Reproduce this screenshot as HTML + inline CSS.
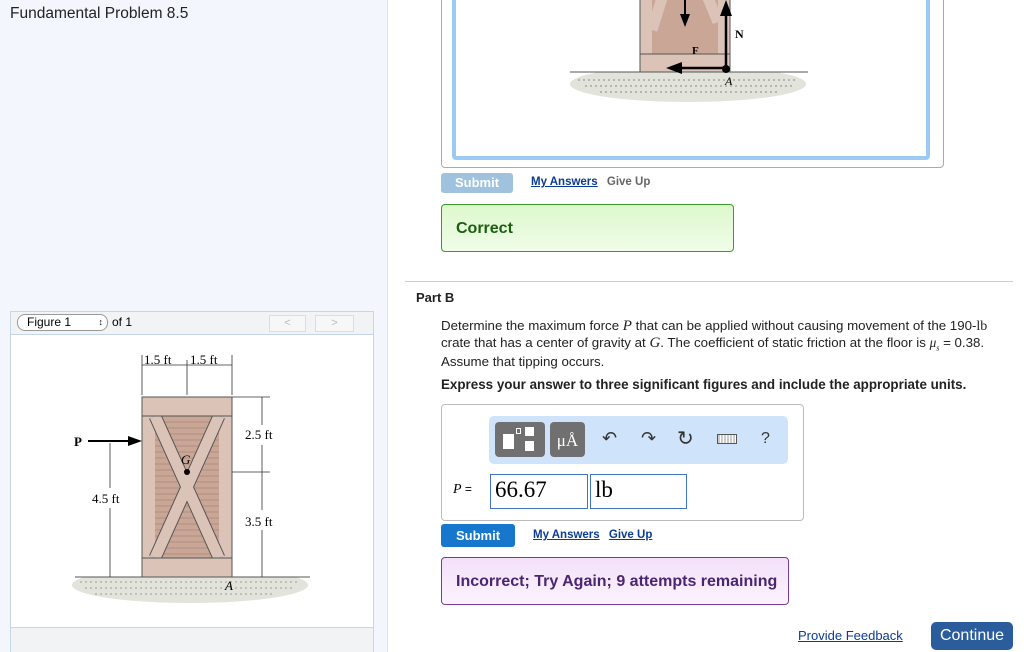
<!DOCTYPE html>
<html><head><meta charset="utf-8"><style>
*{box-sizing:border-box;margin:0;padding:0}
body{width:1024px;height:652px;overflow:hidden;background:#fff;font-family:"Liberation Sans",Arial,sans-serif;position:relative}
.abs{position:absolute}
a{color:#0b3c93}
.m{font-family:'Liberation Serif',serif;line-height:1}
</style></head><body>
<div class="abs" style="left:0;top:0;width:388px;height:652px;background:#f3f7fd;border-right:1px solid #dbe4ee"></div>
<div class="abs" style="left:10px;top:5px;font-size:15.5px;color:#222">Fundamental Problem 8.5</div>

<div class="abs" style="left:10px;top:311px;width:364px;height:341px;border:1px solid #c7d6e6;background:#fff"></div>
<div class="abs" style="left:11px;top:312px;width:362px;height:23px;background:#f1f3f5;border-bottom:1px solid #c7d6e6"></div>
<div class="abs" style="left:17px;top:314px;width:91px;height:17px;border:1px solid #999;border-radius:8px;background:#fff;font-size:12px;padding-left:9px;line-height:15px">Figure 1<span style="position:absolute;right:4px;top:0;font-size:9px">&#8597;</span></div>
<div class="abs" style="left:112px;top:315px;font-size:12px">of 1</div>
<div class="abs" style="left:269px;top:315px;width:37px;height:17px;border:1px solid #ddd;background:#f7f7f7;color:#bbb;font-size:11px;text-align:center;line-height:15px">&lt;</div>
<div class="abs" style="left:315px;top:315px;width:39px;height:17px;border:1px solid #ddd;background:#f7f7f7;color:#bbb;font-size:11px;text-align:center;line-height:15px">&gt;</div>
<div class="abs" style="left:11px;top:627px;width:362px;height:25px;background:#f1f3f5;border-top:1px solid #c7d6e6"></div>

<svg class="abs" style="left:0;top:0" width="1024" height="652" font-family="Liberation Serif,serif">
<ellipse cx="190" cy="585" rx="118" ry="18" fill="#e2e3da"/>
<rect x="70" y="565" width="240" height="12" fill="#fff"/>
<g fill="none" stroke="#888" stroke-width="0.8">
<path d="M80 582h220M85 588h210M95 594h180" stroke-dasharray="2 3"/></g>
<line x1="75" y1="577" x2="310" y2="577" stroke="#555"/>
<rect x="142" y="397" width="90" height="180" fill="#dcc3b8" stroke="#555"/>
<rect x="155" y="416" width="64" height="142" fill="#c9a696"/>
<g stroke="#a5877b" stroke-width="0.7"><path d="M155 422h64M155 428h64M155 434h64M155 440h64M155 446h64M155 452h64M155 458h64M155 464h64M155 470h64M155 476h64M155 482h64M155 488h64M155 494h64M155 500h64M155 506h64M155 512h64M155 518h64M155 524h64M155 530h64M155 536h64M155 542h64M155 548h64M155 554h64"/></g>
<path d="M155 416L219 558M219 416L155 558" stroke="#555" stroke-width="13"/>
<path d="M155 416L219 558M219 416L155 558" stroke="#dcc3b8" stroke-width="11"/>
<rect x="142" y="397" width="90" height="19" fill="#dcc3b8" stroke="#555"/>
<rect x="142" y="558" width="90" height="19" fill="#dcc3b8" stroke="#555"/>
<circle cx="187" cy="472" r="3" fill="#000"/>
<text x="181" y="464" font-size="13" font-style="italic">G</text>
<text x="225" y="590" font-size="13" font-style="italic">A</text>
<g stroke="#333" stroke-width="0.8" fill="none">
<path d="M142 395V355M187 395V360M232 395V355M142 365H232"/>
<path d="M232 397H270M232 472H270M262 397V425M262 445V472M262 472V510M262 530V577"/>
<path d="M110 443V488M110 508V577"/>
</g>
<path d="M88 441H130" stroke="#000" stroke-width="2"/><path d="M128 436L142 441L128 446Z"/>
<text x="74" y="446" font-size="13" font-weight="bold">P</text>
<text x="144" y="364" font-size="13">1.5 ft</text><text x="190" y="364" font-size="13">1.5 ft</text>
<text x="245" y="439" font-size="13">2.5 ft</text>
<text x="245" y="526" font-size="13">3.5 ft</text>
<text x="92" y="503" font-size="13">4.5 ft</text>
</svg>

<div class="abs" style="left:441px;top:-10px;width:503px;height:178px;border:1px solid #aaa;border-radius:4px"></div>
<div class="abs" style="left:452px;top:-10px;width:478px;height:170px;border:4px solid #9dcaf5;border-radius:4px;background:#fff"></div>
<svg class="abs" style="left:0;top:0" width="1024" height="170" font-family="Liberation Serif,serif">
<ellipse cx="688" cy="84" rx="118" ry="18" fill="#e2e3da"/>
<rect x="565" y="58" width="250" height="14" fill="#fff"/>
<path d="M578 80h220M585 86h210M600 92h180" stroke="#888" stroke-dasharray="2 3" fill="none"/>
<line x1="570" y1="72" x2="808" y2="72" stroke="#555"/>
<rect x="640" y="-2" width="90" height="74" fill="#dcc3b8" stroke="#555"/>
<rect x="652" y="-2" width="66" height="56" fill="#c9a696"/>
<path d="M662 -2L652 30M708 -2L718 22" stroke="#dcc3b8" stroke-width="11"/>
<rect x="640" y="54" width="90" height="18" fill="#dcc3b8" stroke="#555"/>
<path d="M685 0V18" stroke="#000" stroke-width="2"/><path d="M680 14L685 27L690 14Z"/>
<path d="M726 70V14" stroke="#000" stroke-width="2.5"/><path d="M720 16L726 0L732 16Z"/>
<path d="M726 68H680" stroke="#000" stroke-width="2.5"/><path d="M682 62L666 68L682 74Z"/>
<circle cx="726" cy="69" r="4"/>
<text x="735" y="38" font-size="12" font-weight="bold">N</text>
<text x="692" y="54" font-size="11" font-weight="bold">F</text>
<text x="725" y="85" font-size="12" font-style="italic">A</text>
</svg>

<div class="abs" style="left:441px;top:173px;width:72px;height:20px;background:#9fc2de;border-radius:3px;color:#fff;font-weight:bold;font-size:13px;text-align:center;line-height:20px">Submit</div>
<div class="abs" style="left:531px;top:176px;font-size:11.5px;font-weight:bold"><a style="text-decoration:underline">My Answers</a> <span style="color:#666;margin-left:6px">Give Up</span></div>
<div class="abs" style="left:441px;top:204px;width:293px;height:48px;border:1px solid #3d9a2d;border-radius:4px;background:linear-gradient(#ddf8cc,#f0fde8);color:#1b5e10;font-weight:bold;font-size:16px;padding:15px 0 0 14px">Correct</div>

<div class="abs" style="left:405px;top:281px;width:608px;height:1px;background:#ccc"></div>
<div class="abs" style="left:416px;top:290px;font-size:13px;font-weight:bold;color:#222">Part B</div>
<div class="abs" style="left:441px;top:317px;font-size:13.3px;line-height:17px;color:#222;white-space:nowrap">Determine the maximum force <i class="m" style="font-size:15px">P</i> that can be applied without causing movement of the 190-<span class="m" style="font-size:14px">lb</span><br>crate that has a center of gravity at <i class="m" style="font-size:15px">G</i>. The coefficient of static friction at the floor is <i class="m">μ<sub style="font-size:8px">s</sub></i> = 0.38.<br>Assume that tipping occurs.</div>
<div class="abs" style="left:441px;top:377px;font-size:13.4px;font-weight:bold;color:#222">Express your answer to three significant figures and include the appropriate units.</div>

<div class="abs" style="left:441px;top:404px;width:363px;height:117px;border:1px solid #bbb;border-radius:4px"></div>
<div class="abs" style="left:489px;top:416px;width:299px;height:48px;background:#cfe4fb;border-radius:5px"></div>
<div class="abs" style="left:495px;top:422px;width:50px;height:35px;background:#707070;border-radius:4px"></div>
<div class="abs" style="left:503px;top:434px;width:11px;height:15px;background:#fff"></div>
<div class="abs" style="left:516px;top:428px;width:5px;height:6px;border:1px solid #fff"></div>
<div class="abs" style="left:525px;top:427px;width:9px;height:9px;background:#fff"></div>
<div class="abs" style="left:525px;top:441px;width:9px;height:10px;background:#fff"></div>
<div class="abs" style="left:550px;top:422px;width:35px;height:35px;background:#707070;border-radius:4px;color:#fff;font-family:'Liberation Serif',serif;font-size:17px;text-align:center;line-height:38px">μÅ</div>
<div class="abs" style="left:602px;top:428px;font-size:18px;color:#333">&#8630;</div>
<div class="abs" style="left:641px;top:428px;font-size:18px;color:#333">&#8631;</div>
<div class="abs" style="left:677px;top:426px;font-size:20px;color:#333">&#8635;</div>
<div class="abs" style="left:717px;top:434px;width:20px;height:10px;border:1px solid #555;background:repeating-linear-gradient(90deg,#ccc 0 2px,#fff 2px 3px)"></div>
<div class="abs" style="left:761px;top:430px;font-size:16px;color:#333">?</div>
<div class="abs" style="left:453px;top:482px;font-size:14px;font-family:'Liberation Serif',serif"><i>P</i><span style="font-family:'Liberation Sans',sans-serif;font-size:12px"> =</span></div>
<div class="abs" style="left:490px;top:474px;width:98px;height:35px;border:1px solid #3f74c9;font-family:'Liberation Serif',serif;font-size:23px;padding:2px 0 0 4px">66.67</div>
<div class="abs" style="left:590px;top:474px;width:97px;height:35px;border:1px solid #3f74c9;font-family:'Liberation Serif',serif;font-size:23px;padding:2px 0 0 4px">lb</div>

<div class="abs" style="left:441px;top:524px;width:74px;height:23px;background:#1677cc;border-radius:3px;color:#fff;font-weight:bold;font-size:13px;text-align:center;line-height:23px">Submit</div>
<div class="abs" style="left:533px;top:529px;font-size:11.5px;font-weight:bold"><a style="text-decoration:underline">My Answers</a> <a style="text-decoration:underline;margin-left:6px">Give Up</a></div>
<div class="abs" style="left:441px;top:557px;width:348px;height:48px;border:1px solid #7a3d8f;border-radius:4px;background:linear-gradient(#f3e0f9,#fcf3fe);color:#4a2670;font-weight:bold;font-size:16px;padding:15px 0 0 14px">Incorrect; Try Again; 9 attempts remaining</div>

<div class="abs" style="left:798px;top:628px;font-size:13px"><a style="text-decoration:underline">Provide Feedback</a></div>
<div class="abs" style="left:931px;top:622px;width:82px;height:28px;background:#2b5c9c;border-radius:5px;color:#fff;font-size:16px;text-align:center;line-height:27px">Continue</div>
</body></html>
